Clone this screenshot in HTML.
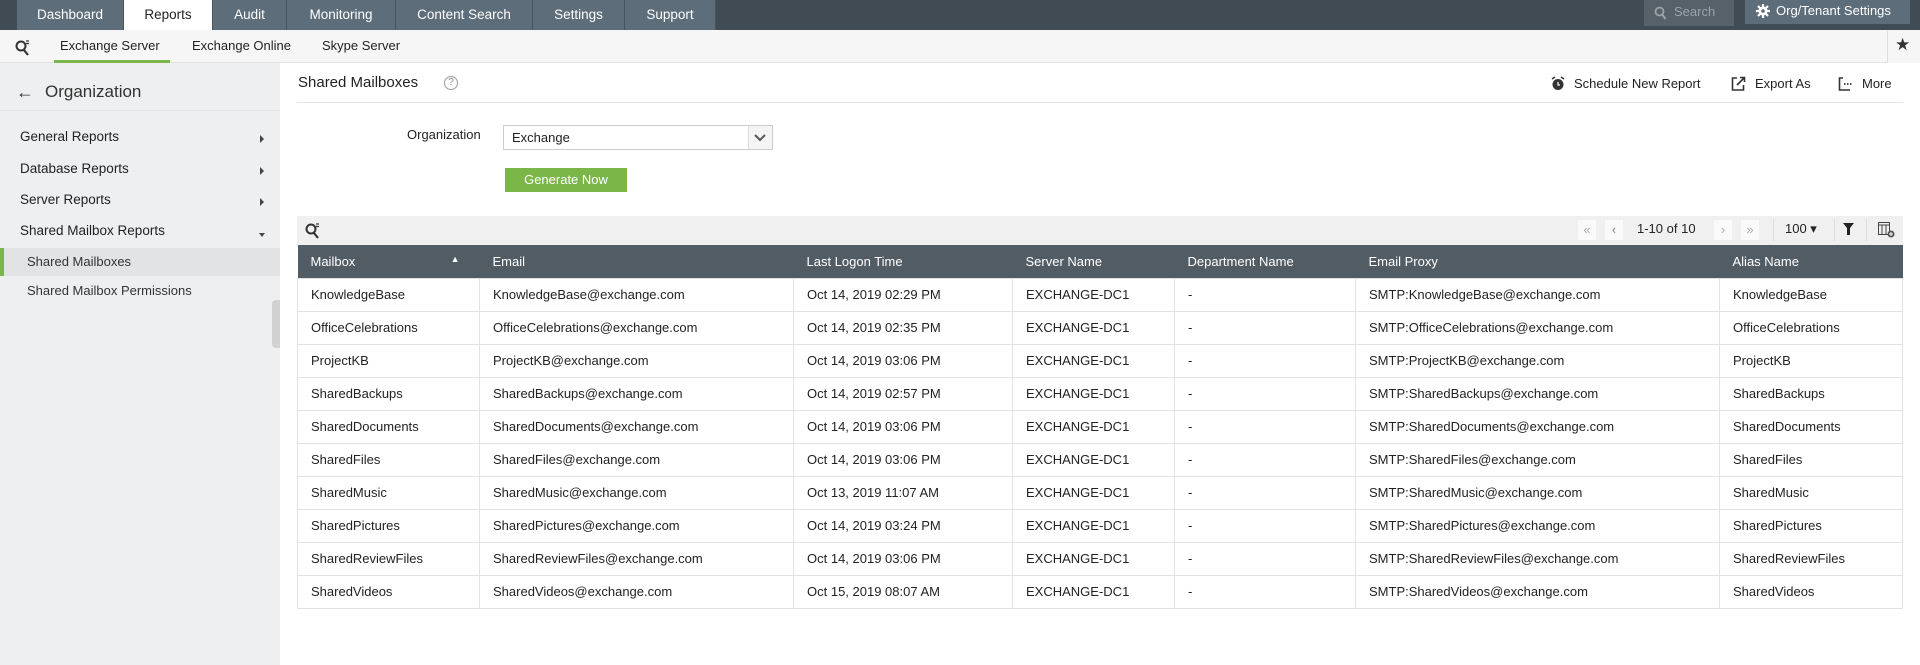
<!DOCTYPE html>
<html><head><meta charset="utf-8"><style>
*{box-sizing:border-box;margin:0;padding:0}
body{width:1920px;height:665px;overflow:hidden;background:#fff;font-family:"Liberation Sans",sans-serif;font-size:13px;color:#222;position:relative}
.abs{position:absolute}
#top{left:0;top:0;width:1920px;height:30px;background:#414b53}
.tab{position:absolute;top:0;height:30px;background:#5d6d79;color:#fff;font-size:13.5px;line-height:30px;text-align:center;border-right:1px solid #48545d}
#sub{left:0;top:30px;width:1920px;height:33px;background:#f6f6f6;border-bottom:1px solid #e2e2e2}
.st{position:absolute;top:30px;height:33px;line-height:32px;font-size:13px;color:#222}
#side{left:0;top:63px;width:280px;height:602px;background:#eeeff0}
.mi{position:absolute;left:20px;font-size:13.5px;color:#222}
.arr{position:absolute;left:260px;width:0;height:0;border-top:4px solid transparent;border-bottom:4px solid transparent;border-left:4px solid #444}
table{position:absolute;left:297px;top:245px;width:1606px;border-collapse:collapse;font-size:13px}
th{background:#525c65;color:#fff;font-weight:normal;text-align:left;height:33px;padding-left:13px;font-size:13px}
td{height:33px;padding-left:13px;border:1px solid #e3e3e3;color:#222}
</style></head><body>
<div id="top" class="abs"></div>
<div class="tab" style="left:17px;width:107px">Dashboard</div>
<div class="tab" style="left:124px;width:89px;background:#fff;color:#222">Reports</div>
<div class="tab" style="left:213px;width:74px">Audit</div>
<div class="tab" style="left:287px;width:109px">Monitoring</div>
<div class="tab" style="left:396px;width:137px">Content Search</div>
<div class="tab" style="left:533px;width:92px">Settings</div>
<div class="tab" style="left:625px;width:91px">Support</div>
<div class="abs" style="left:1644px;top:0;width:90px;height:26px;background:#56616a;color:#9aa3aa;line-height:24px;font-size:13px;padding-left:30px">Search
<svg class="abs" style="left:10px;top:6px" width="13" height="14" viewBox="0 0 13 14"><circle cx="5.5" cy="5.5" r="4" fill="none" stroke="#9aa3aa" stroke-width="1.8"/><path d="M8.5 9l3 4" stroke="#9aa3aa" stroke-width="2"/></svg></div>
<div class="abs" style="left:1745px;top:0;width:165px;height:24px;background:#5d6d79;color:#fff;line-height:22px;font-size:13px;padding-left:31px">Org/Tenant Settings
<svg class="abs" style="left:11px;top:4px" width="14" height="14" viewBox="0 0 14 14"><circle cx="7" cy="7" r="4.5" fill="#fff"/><g stroke="#fff" stroke-width="2.2"><path d="M7 0v14M0 7h14M2 2l10 10M12 2L2 12"/></g><circle cx="7" cy="7" r="1.8" fill="#5d6d79"/></svg></div>

<div id="sub" class="abs"></div>
<svg class="abs" style="left:15px;top:39px" width="16" height="17" viewBox="0 0 16 17"><circle cx="6" cy="7" r="4.5" fill="none" stroke="#333" stroke-width="2"/><path d="M9 11l4 5" stroke="#333" stroke-width="2.2"/><path d="M11 2h3M11 4.5h3" stroke="#333" stroke-width="1.2"/></svg>
<div class="st" style="left:60px">Exchange Server</div>
<div class="abs" style="left:54px;top:60px;width:116px;height:3px;background:#7ab648"></div>
<div class="st" style="left:192px">Exchange Online</div>
<div class="st" style="left:322px">Skype Server</div>
<div class="abs" style="left:1887px;top:31px;width:33px;height:32px;border-left:1px solid #ddd;background:#f6f6f6"></div>
<div class="abs" style="left:1895px;top:35px;font-size:17px;color:#333">★</div>

<div id="side" class="abs"></div>
<div class="abs" style="left:16px;top:82px;font-size:18px;color:#333">←</div>
<div class="abs" style="left:45px;top:82px;font-size:17px;color:#333">Organization</div>
<div class="abs" style="left:0;top:110px;width:280px;height:1px;background:#e4e4e4"></div>
<div class="mi" style="top:129px">General Reports</div><div class="arr" style="top:135px"></div>
<div class="mi" style="top:161px">Database Reports</div><div class="arr" style="top:167px"></div>
<div class="mi" style="top:192px">Server Reports</div><div class="arr" style="top:198px"></div>
<div class="mi" style="top:223px">Shared Mailbox Reports</div>
<div class="abs" style="left:259px;top:233px;border-left:3.5px solid transparent;border-right:3.5px solid transparent;border-top:4px solid #444"></div>
<div class="abs" style="left:0;top:248px;width:280px;height:28px;background:#e2e3e4;border-left:4px solid #7ab648"></div>
<div class="mi" style="left:27px;top:254px;font-size:13px;color:#333">Shared Mailboxes</div>
<div class="mi" style="left:27px;top:283px;font-size:13px;color:#333">Shared Mailbox Permissions</div>
<div class="abs" style="left:272px;top:300px;width:8px;height:48px;background:#cfd1d3;border-radius:4px 0 0 4px"></div>

<div class="abs" style="left:298px;top:74px;font-size:15px;color:#222">Shared Mailboxes</div>
<div class="abs" style="left:444px;top:76px;width:14px;height:14px;border:1px solid #999;border-radius:50%;font-size:10px;color:#888;text-align:center;line-height:12px">?</div>
<div class="abs" style="left:297px;top:102px;width:1606px;height:1px;background:#e3e3e3"></div>
<svg class="abs" style="left:1551px;top:76px" width="14" height="15" viewBox="0 0 14 15"><circle cx="7" cy="8.5" r="5.5" fill="#333"/><path d="M1 3l3-2M13 3l-3-2" stroke="#333" stroke-width="1.6"/><path d="M7 6v3h2" stroke="#fff" stroke-width="1.2" fill="none"/></svg>
<div class="abs" style="left:1574px;top:76px;font-size:13px">Schedule New Report</div>
<svg class="abs" style="left:1731px;top:76px" width="15" height="15" viewBox="0 0 15 15"><path d="M6 2H1.5v12h11V9" fill="none" stroke="#333" stroke-width="1.6"/><path d="M6 9l7-7M9 1.5h4.5V6" fill="none" stroke="#333" stroke-width="1.6"/></svg>
<div class="abs" style="left:1755px;top:76px;font-size:13px">Export As</div>
<svg class="abs" style="left:1838px;top:77px" width="14" height="14" viewBox="0 0 14 14"><path d="M5 1H1.5v12H12" fill="none" stroke="#333" stroke-width="1.6"/><path d="M6 7h1.5M9 7h1.5M12 7h1.5" stroke="#333" stroke-width="1.8"/></svg>
<div class="abs" style="left:1862px;top:76px;font-size:13px">More</div>

<div class="abs" style="left:407px;top:127px;font-size:13px">Organization</div>
<div class="abs" style="left:503px;top:125px;width:270px;height:25px;border:1px solid #ccc;background:#fff;padding-left:8px;line-height:23px;font-size:13px">Exchange</div>
<div class="abs" style="left:748px;top:126px;width:24px;height:23px;border-left:1px solid #ddd;background:#f4f4f4"></div>
<svg class="abs" style="left:754px;top:134px" width="12" height="8" viewBox="0 0 12 8"><path d="M1 1l5 5 5-5" fill="none" stroke="#555" stroke-width="2"/></svg>
<div class="abs" style="left:505px;top:168px;width:122px;height:24px;background:#7ab648;color:#fff;font-size:13px;text-align:center;line-height:24px">Generate Now</div>

<div class="abs" style="left:297px;top:216px;width:1606px;height:29px;background:#f0f0f0"></div>
<svg class="abs" style="left:305px;top:222px" width="16" height="17" viewBox="0 0 16 17"><circle cx="6" cy="7" r="4.5" fill="none" stroke="#333" stroke-width="2"/><path d="M9 11l4 5" stroke="#333" stroke-width="2.2"/><path d="M11 2h3M11 4.5h3" stroke="#333" stroke-width="1.2"/></svg>
<div class="abs" style="left:1578px;top:220px;width:18px;height:20px;background:#fafafa;color:#aaa;text-align:center;line-height:20px;font-size:13px">«</div>
<div class="abs" style="left:1605px;top:220px;width:18px;height:20px;background:#fafafa;color:#888;text-align:center;line-height:20px;font-size:13px">‹</div>
<div class="abs" style="left:1637px;top:221px;font-size:13px;color:#222">1-10 of 10</div>
<div class="abs" style="left:1714px;top:220px;width:18px;height:20px;background:#fafafa;color:#aaa;text-align:center;line-height:20px;font-size:13px">›</div>
<div class="abs" style="left:1741px;top:220px;width:18px;height:20px;background:#fafafa;color:#aaa;text-align:center;line-height:20px;font-size:13px">»</div>
<div class="abs" style="left:1773px;top:219px;width:1px;height:22px;background:#ddd"></div>
<div class="abs" style="left:1785px;top:221px;font-size:13px">100 ▾</div>
<div class="abs" style="left:1834px;top:219px;width:1px;height:22px;background:#ddd"></div>
<svg class="abs" style="left:1843px;top:223px" width="11" height="12" viewBox="0 0 11 12"><path d="M0 0h11L7 5v7H4V5z" fill="#222"/></svg>
<div class="abs" style="left:1866px;top:219px;width:1px;height:22px;background:#ddd"></div>
<svg class="abs" style="left:1878px;top:222px" width="17" height="16" viewBox="0 0 17 16"><rect x="0.5" y="0.5" width="11" height="12" fill="none" stroke="#444"/><path d="M0 3h12M4 3v10M8 3v10" stroke="#444"/><circle cx="13" cy="12" r="3.5" fill="#555"/><path d="M13 10v4M11 12h4" stroke="#fff"/></svg>

<table>
<tr><th style="width:182px">Mailbox <span style="float:right;margin-right:20px;font-size:9px">▲</span></th><th style="width:314px">Email</th><th style="width:219px">Last Logon Time</th><th style="width:162px">Server Name</th><th style="width:181px">Department Name</th><th style="width:364px">Email Proxy</th><th>Alias Name</th></tr>
<tr><td>KnowledgeBase</td><td>KnowledgeBase@exchange.com</td><td>Oct 14, 2019 02:29 PM</td><td>EXCHANGE-DC1</td><td>-</td><td>SMTP:KnowledgeBase@exchange.com</td><td>KnowledgeBase</td></tr>
<tr><td>OfficeCelebrations</td><td>OfficeCelebrations@exchange.com</td><td>Oct 14, 2019 02:35 PM</td><td>EXCHANGE-DC1</td><td>-</td><td>SMTP:OfficeCelebrations@exchange.com</td><td>OfficeCelebrations</td></tr>
<tr><td>ProjectKB</td><td>ProjectKB@exchange.com</td><td>Oct 14, 2019 03:06 PM</td><td>EXCHANGE-DC1</td><td>-</td><td>SMTP:ProjectKB@exchange.com</td><td>ProjectKB</td></tr>
<tr><td>SharedBackups</td><td>SharedBackups@exchange.com</td><td>Oct 14, 2019 02:57 PM</td><td>EXCHANGE-DC1</td><td>-</td><td>SMTP:SharedBackups@exchange.com</td><td>SharedBackups</td></tr>
<tr><td>SharedDocuments</td><td>SharedDocuments@exchange.com</td><td>Oct 14, 2019 03:06 PM</td><td>EXCHANGE-DC1</td><td>-</td><td>SMTP:SharedDocuments@exchange.com</td><td>SharedDocuments</td></tr>
<tr><td>SharedFiles</td><td>SharedFiles@exchange.com</td><td>Oct 14, 2019 03:06 PM</td><td>EXCHANGE-DC1</td><td>-</td><td>SMTP:SharedFiles@exchange.com</td><td>SharedFiles</td></tr>
<tr><td>SharedMusic</td><td>SharedMusic@exchange.com</td><td>Oct 13, 2019 11:07 AM</td><td>EXCHANGE-DC1</td><td>-</td><td>SMTP:SharedMusic@exchange.com</td><td>SharedMusic</td></tr>
<tr><td>SharedPictures</td><td>SharedPictures@exchange.com</td><td>Oct 14, 2019 03:24 PM</td><td>EXCHANGE-DC1</td><td>-</td><td>SMTP:SharedPictures@exchange.com</td><td>SharedPictures</td></tr>
<tr><td>SharedReviewFiles</td><td>SharedReviewFiles@exchange.com</td><td>Oct 14, 2019 03:06 PM</td><td>EXCHANGE-DC1</td><td>-</td><td>SMTP:SharedReviewFiles@exchange.com</td><td>SharedReviewFiles</td></tr>
<tr><td>SharedVideos</td><td>SharedVideos@exchange.com</td><td>Oct 15, 2019 08:07 AM</td><td>EXCHANGE-DC1</td><td>-</td><td>SMTP:SharedVideos@exchange.com</td><td>SharedVideos</td></tr>
</table>
</body></html>
